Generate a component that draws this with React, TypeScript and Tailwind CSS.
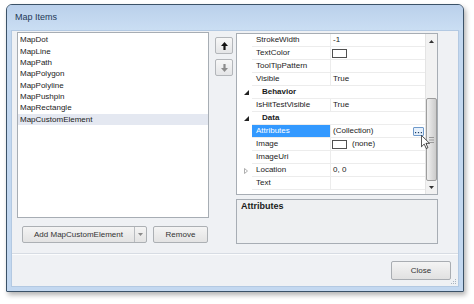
import React from "react";

const rows: Array<
  | { kind: "cat"; name: string }
  | { kind: "prop"; name: string; value?: string; swatch?: boolean; selected?: boolean; ellipsis?: boolean; expand?: boolean }
> = [
  { kind: "prop", name: "StrokeWidth", value: "-1" },
  { kind: "prop", name: "TextColor", swatch: true },
  { kind: "prop", name: "ToolTipPattern" },
  { kind: "prop", name: "Visible", value: "True" },
  { kind: "cat", name: "Behavior" },
  { kind: "prop", name: "IsHitTestVisible", value: "True" },
  { kind: "cat", name: "Data" },
  { kind: "prop", name: "Attributes", value: "(Collection)", selected: true, ellipsis: true },
  { kind: "prop", name: "Image", value: "(none)", swatch: true },
  { kind: "prop", name: "ImageUri" },
  { kind: "prop", name: "Location", value: "0, 0", expand: true },
  { kind: "prop", name: "Text" },
];

const items = [
  "MapDot",
  "MapLine",
  "MapPath",
  "MapPolygon",
  "MapPolyline",
  "MapPushpin",
  "MapRectangle",
  "MapCustomElement",
];

function ArrowBtn({ up }: { up?: boolean }) {
  return (
    <div className="w-[18px] h-[17px] rounded-[2px] border border-[#b3b6ba] bg-gradient-to-b from-[#f7f7f7] to-[#e4e5e7] flex items-center justify-center">
      <svg width="7" height="8" viewBox="0 0 7 8">
        {up ? (
          <path d="M3.5 0 L7 4 L4.6 4 L4.6 8 L2.4 8 L2.4 4 L0 4 Z" fill="#111" />
        ) : (
          <path d="M3.5 8 L7 4 L4.6 4 L4.6 0 L2.4 0 L2.4 4 L0 4 Z" fill="#8c8c8c" />
        )}
      </svg>
    </div>
  );
}

export default function App() {
  return (
    <div className="w-[474px] h-[304px] bg-white pt-[4px] pl-[6px] font-[family-name:'Liberation_Sans',Arial,sans-serif] text-[8px] text-[#1b1b1b]">
      <div className="w-[458px] h-[288px] rounded-t-[6px] rounded-b-[1px] border border-[#3b5268] bg-[#c3d8f0] shadow-[2px_3px_5px_rgba(0,0,0,0.3)] flex flex-col">
        {/* title bar */}
        <div className="h-[25px] shrink-0 rounded-t-[5px] bg-gradient-to-b from-[#bad0eb] to-[#cadef3] flex items-center pl-[8px] text-[9px] text-[#1e3857]">
          Map Items
        </div>
        {/* client */}
        <div className="mx-[4px] h-[257px] shrink-0 border border-[#b3c9e2] bg-[#eff1f4] flex flex-col">
          <div className="flex pl-[5px] pt-[1px]">
            {/* left column */}
            <div className="flex flex-col w-[192px]">
              <div className="h-[186px] border border-[#a7adb4] bg-white pt-[1.3px]">
                {items.map((it) => (
                  <div
                    key={it}
                    className={
                      "h-[11.36px] leading-[11.36px] pl-[2px] " +
                      (it === "MapCustomElement" ? "bg-[#e4e8f1]" : "")
                    }
                  >
                    {it}
                  </div>
                ))}
              </div>
              <div className="flex mt-[8px] pl-[5px] gap-[6px]">
                <div className="flex h-[17px] w-[125px] rounded-[2px] border border-[#acb0b4] bg-gradient-to-b from-[#f4f4f4] to-[#e3e3e3] text-[#333]">
                  <div className="w-[112px] flex items-center justify-center border-r border-[#b9bcc0]">
                    Add MapCustomElement
                  </div>
                  <div className="flex-1 flex items-center justify-center">
                    <svg width="5" height="3" viewBox="0 0 5 3">
                      <path d="M0 0 L5 0 L2.5 3 Z" fill="#8a8a8a" />
                    </svg>
                  </div>
                </div>
                <div className="h-[17px] w-[55px] rounded-[2px] border border-[#acb0b4] bg-gradient-to-b from-[#f4f4f4] to-[#e3e3e3] flex items-center justify-center text-[#333]">
                  Remove
                </div>
              </div>
            </div>
            {/* middle column */}
            <div className="ml-[6px] mt-[5px] flex flex-col gap-[5px]">
              <ArrowBtn up />
              <ArrowBtn />
            </div>
            {/* right column */}
            <div className="ml-[3px] mt-[1px] flex flex-col w-[202px]">
              <div className="relative h-[162px] border border-[#a7adb4] bg-white flex">
                <div className="w-[188px] flex flex-col">
                  {rows.map((r, i) =>
                    r.kind === "cat" ? (
                      <div key={i} className="h-[13px] flex items-center">
                        <div className="w-[15px] h-full flex items-center pl-[7px]">
                          <svg width="5" height="5" viewBox="0 0 5 5">
                            <path d="M5 0 L5 5 L0 5 Z" fill="#222" />
                          </svg>
                        </div>
                        <div className="flex-1 h-full border-b border-[#ededed] pl-[10px] font-bold leading-[12px]">
                          {r.name}
                        </div>
                      </div>
                    ) : (
                      <div key={i} className="h-[13px] flex">
                        <div className="w-[15px] h-full flex items-center pl-[7px]">
                          {r.expand && (
                            <svg width="4" height="6" viewBox="0 0 4 6">
                              <path d="M0.5 0.5 L3.5 3 L0.5 5.5 Z" fill="none" stroke="#9a9a9a" strokeWidth="0.8" />
                            </svg>
                          )}
                        </div>
                        <div
                          className={
                            "w-[79px] h-full border-b border-r border-[#ececec] pl-[4px] leading-[12px] " +
                            (r.selected ? "bg-[#3399ff] text-white" : "")
                          }
                        >
                          {r.name}
                        </div>
                        <div className="flex-1 h-full border-b border-[#ececec] flex items-center pl-[1px]">
                          {r.swatch && (
                            <div className="w-[15px] h-[9px] border border-[#505050] bg-white mr-[5px]" />
                          )}
                          {r.value && <span className={r.swatch ? "" : "pl-[1px]"}>{r.value}</span>}
                          {r.ellipsis && (
                            <div className="ml-auto mr-[1px] w-[11px] h-[9px] rounded-[1px] border border-[#6f9acb] bg-[#e6f0fb] flex items-end justify-center pb-[1px]">
                              <svg width="7" height="2" viewBox="0 0 7 2">
                                <rect x="0" y="0" width="1.2" height="1.2" fill="#1b3d66" />
                                <rect x="2.9" y="0" width="1.2" height="1.2" fill="#1b3d66" />
                                <rect x="5.8" y="0" width="1.2" height="1.2" fill="#1b3d66" />
                              </svg>
                            </div>
                          )}
                        </div>
                      </div>
                    )
                  )}
                </div>
                {/* scrollbar */}
                <div className="w-[12px] flex flex-col bg-[#f2f2f2] border-l border-[#e4e4e4]">
                  <div className="h-[14px] flex items-center justify-center">
                    <svg width="5" height="3" viewBox="0 0 5 3">
                      <path d="M0 3 L5 3 L2.5 0 Z" fill="#333" />
                    </svg>
                  </div>
                  <div className="h-[50px]" />
                  <div className="h-[83px] rounded-[2px] border border-[#9d9d9d] bg-gradient-to-r from-[#f0f0f0] to-[#cbcbcb]" />
                  <div className="flex-1 flex items-center justify-center">
                    <svg width="5" height="3" viewBox="0 0 5 3">
                      <path d="M0 0 L5 0 L2.5 3 Z" fill="#333" />
                    </svg>
                  </div>
                </div>
                {/* mouse cursor */}
                <svg
                  className="absolute left-[184px] top-[101px]"
                  width="9"
                  height="14"
                  viewBox="0 0 12 19"
                >
                  <path
                    d="M0.5 0.5 L0.5 16 L4.2 12.3 L7 18.3 L9.3 17.3 L6.6 11.3 L11.5 11.3 Z"
                    fill="#fff"
                    stroke="#111"
                    strokeWidth="1"
                  />
                </svg>
                <svg className="absolute left-[191px] top-[103px]" width="6" height="8" viewBox="0 0 6 8">
                  <rect x="1" y="0" width="5" height="1" fill="#9a9a9a" />
                  <rect x="1" y="2.5" width="5" height="1" fill="#9a9a9a" />
                  <rect x="1" y="5" width="5" height="1" fill="#9a9a9a" />
                </svg>
              </div>
              <div className="mt-[4px] h-[45px] border border-[#a7adb4] bg-[#eef0f2] pl-[4px] text-[9px] font-bold leading-[12px]">
                Attributes
              </div>
            </div>
          </div>
          {/* separator */}
          <div className="mt-[9px] h-[1px] bg-[#d7dce3]" />
          <div className="h-[1px] bg-[#fbfcfd]" />
          {/* footer */}
          <div className="flex-1 flex justify-end pr-[1px]">
            <div className="mt-[6px] w-[60px] h-[19px] rounded-[2px] border border-[#a9adb2] bg-gradient-to-b from-[#f4f4f4] to-[#e1e1e1] flex items-center justify-center text-[#333]">
              Close
            </div>
            <svg className="self-end mb-[1px]" width="6" height="6" viewBox="0 0 6 6">
              <rect x="4" y="0" width="1" height="1" fill="#a9b4c0" />
              <rect x="2" y="2" width="1" height="1" fill="#a9b4c0" />
              <rect x="4" y="2" width="1" height="1" fill="#a9b4c0" />
              <rect x="0" y="4" width="1" height="1" fill="#a9b4c0" />
              <rect x="2" y="4" width="1" height="1" fill="#a9b4c0" />
              <rect x="4" y="4" width="1" height="1" fill="#a9b4c0" />
            </svg>
          </div>
        </div>
      </div>
    </div>
  );
}
